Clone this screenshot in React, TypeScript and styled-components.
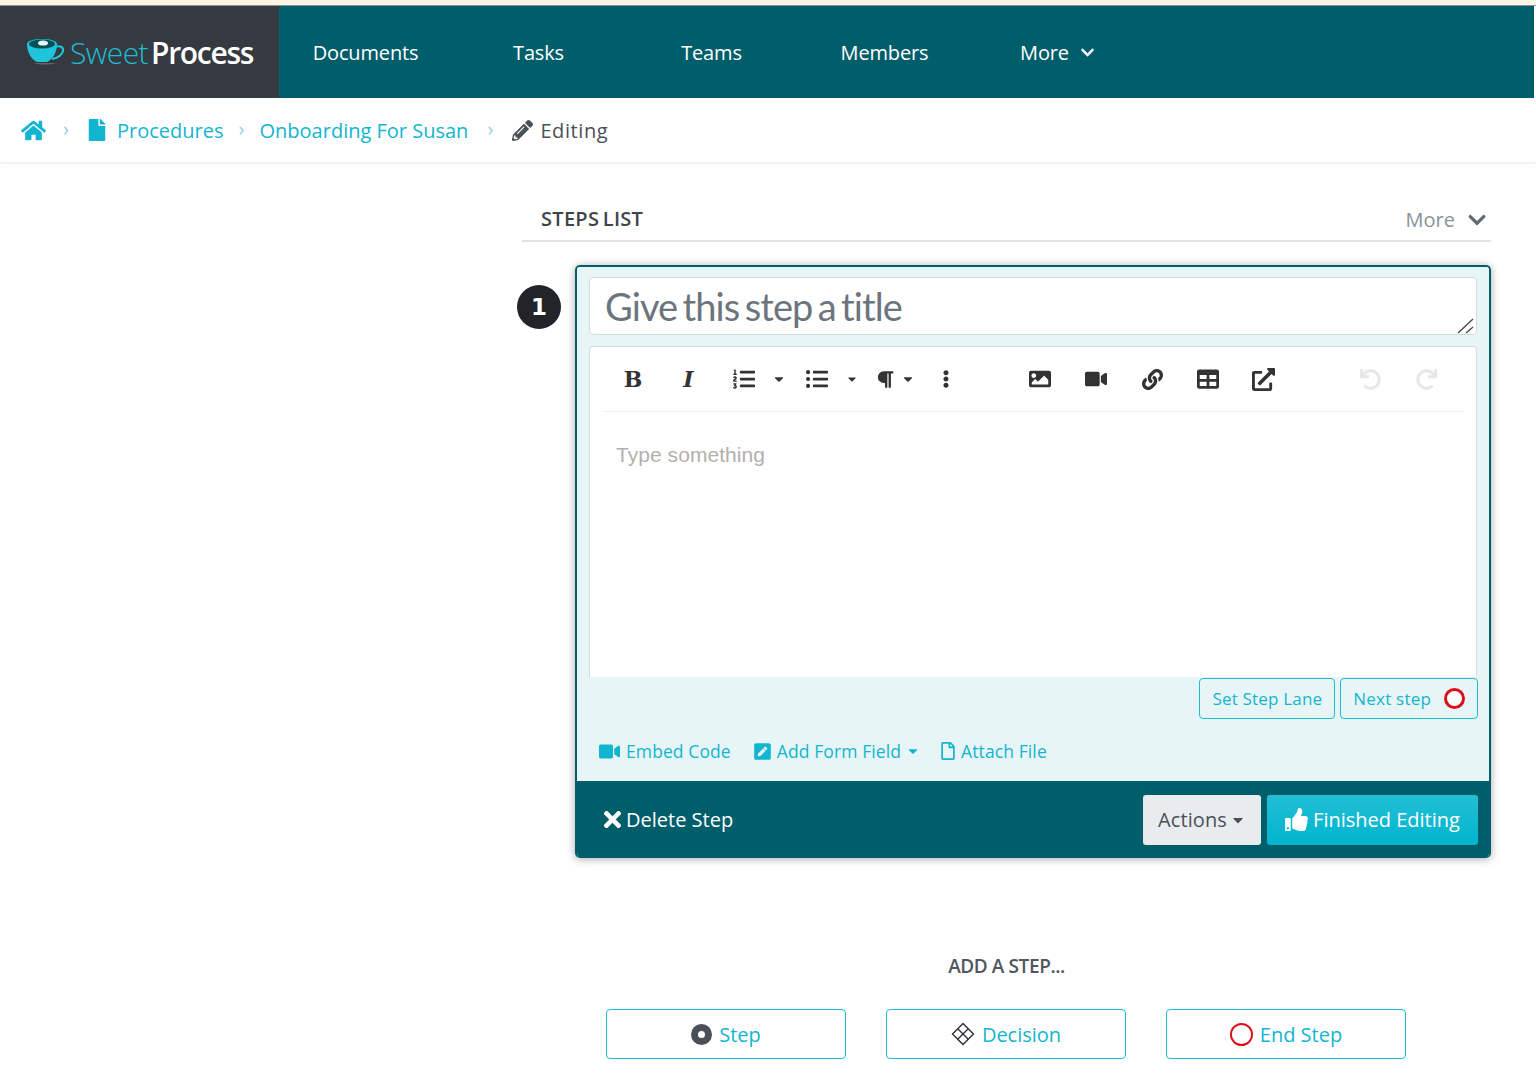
import React from 'react';
import styled, { createGlobalStyle } from 'styled-components';
import {
  FaCaretDown,
  FaChevronDown,
  FaEllipsisV,
  FaExternalLinkAlt,
  FaFile,
  FaHome,
  FaImage,
  FaLink,
  FaListOl,
  FaListUl,
  FaParagraph,
  FaPencilAlt,
  FaPenSquare,
  FaRedo,
  FaRegFile,
  FaTable,
  FaThumbsUp,
  FaTimes,
  FaUndo,
  FaVideo,
} from 'react-icons/fa';

const GlobalStyle = createGlobalStyle`
  html, body {
    margin: 0;
    padding: 0;
    background: #fff;
    font-family: "Open Sans", "Noto Sans", sans-serif;
    color: #495057;
  }
  * { box-sizing: border-box; }
`;

const NAV_ITEMS = ['Documents', 'Tasks', 'Teams', 'Members'];

function CupLogo() {
  return (
    <svg width="40" height="28" viewBox="0 0 40 28" aria-hidden="true">
      <path d="M28 9c6-2 10 0 9 4-1 4-6 7-11 8" fill="none" stroke="#1fc4da" strokeWidth="2" />
      <path d="M1 6c0-3 6-5 15-5s15 2 15 5c0 9-5 16-10 18H11C6 22 1 15 1 6z" fill="#1fc4da" />
      <ellipse cx="16" cy="6" rx="13" ry="4.5" fill="#00505c" />
      <ellipse cx="17" cy="5" rx="5" ry="2.6" fill="#e8f5f7" />
      <path d="M8 25h22c-4 2-18 2-22 0z" fill="#5c6670" />
    </svg>
  );
}

function RingMark({ size, stroke }: { size: number; stroke: number }) {
  return (
    <svg width={size} height={size} viewBox="0 0 24 24" aria-hidden="true">
      <circle cx="12" cy="12" r={12 - stroke / 2} fill="#fff" stroke="#d9101c" strokeWidth={stroke} />
    </svg>
  );
}

function DecisionMark() {
  return (
    <svg width="24" height="24" viewBox="0 0 24 24" aria-hidden="true">
      <g fill="none" stroke="#2b2f33" strokeWidth="1.4">
        <path d="M12 1.5L22.5 12 12 22.5 1.5 12z" />
        <path d="M7 7l10 10M17 7L7 17" />
      </g>
    </svg>
  );
}

function ResizeGrip() {
  return (
    <svg width="18" height="16" viewBox="0 0 18 16" aria-hidden="true">
      <path d="M1 15L16 1M9 15l7-6" fill="none" stroke="#444" strokeWidth="1.3" />
    </svg>
  );
}

export default function App() {
  return (
    <Page>
      <GlobalStyle />
      <TopStrip />
      <Header>
        <Brand>
          <CupLogo />
          <BrandLight>Sweet</BrandLight>
          <BrandBold>Process</BrandBold>
        </Brand>
        <Nav>
          {NAV_ITEMS.map((item) => (
            <NavItem key={item}>{item}</NavItem>
          ))}
          <NavItem>
            More
            <NavChevron>
              <FaChevronDown />
            </NavChevron>
          </NavItem>
        </Nav>
      </Header>

      <Breadcrumb>
        <CrumbLink>
          <FaHome size={25} />
        </CrumbLink>
        <CrumbSep $gap={17}>›</CrumbSep>
        <CrumbLink>
          <FaFile size={22} />
          <CrumbText>Procedures</CrumbText>
        </CrumbLink>
        <CrumbSep $gap={15}>›</CrumbSep>
        <CrumbLink>
          <CrumbText>Onboarding For Susan</CrumbText>
        </CrumbLink>
        <CrumbSep $gap={19}>›</CrumbSep>
        <CrumbCurrent>
          <FaPencilAlt size={21} />
          Editing
        </CrumbCurrent>
      </Breadcrumb>

      <Content>
        <ListHeader>
          <ListTitle>STEPS LIST</ListTitle>
          <ListMore>
            More
            <FaChevronDown size={20} color="#5f6b75" />
          </ListMore>
        </ListHeader>

        <StepRow>
          <StepNumber>1</StepNumber>
          <StepCard>
            <CardBody>
              <TitleBox>
                <TitleText>Give this step a title</TitleText>
                <GripHolder>
                  <ResizeGrip />
                </GripHolder>
              </TitleBox>
              <EditorBox>
                <Toolbar>
                  <ToolGroup>
                    <ToolBtn $w={56}><ToolLetter>B</ToolLetter></ToolBtn>
                    <ToolBtn $w={55}><ToolLetter $italic>I</ToolLetter></ToolBtn>
                    <ToolBtn $w={56}><FaListOl size={22} /></ToolBtn>
                    <ToolBtn $w={14}><FaCaretDown size={14} /></ToolBtn>
                    <ToolBtn $w={62}><FaListUl size={22} /></ToolBtn>
                    <ToolBtn $w={8}><FaCaretDown size={14} /></ToolBtn>
                    <ToolBtn $w={18} $ml={20}><FaParagraph size={19} /></ToolBtn>
                    <ToolBtn $w={28}><FaCaretDown size={14} /></ToolBtn>
                    <ToolBtn $w={48}><FaEllipsisV size={18} /></ToolBtn>
                  </ToolGroup>
                  <ToolGroup $ml={42}>
                    <ToolBtn $w={56}><FaImage size={22} /></ToolBtn>
                    <ToolBtn $w={56}><FaVideo size={22} /></ToolBtn>
                    <ToolBtn $w={56}><FaLink size={21} /></ToolBtn>
                    <ToolBtn $w={55}><FaTable size={22} /></ToolBtn>
                    <ToolBtn $w={56}><FaExternalLinkAlt size={23} /></ToolBtn>
                  </ToolGroup>
                  <ToolGroup $ml={51} $muted>
                    <ToolBtn $w={56}><FaUndo size={21} /></ToolBtn>
                    <ToolBtn $w={56}><FaRedo size={21} /></ToolBtn>
                  </ToolGroup>
                </Toolbar>
                <Placeholder>Type something</Placeholder>
              </EditorBox>
              <LaneRow>
                <OutlineBtn>Set Step Lane</OutlineBtn>
                <OutlineBtn>
                  Next step
                  <NextRing>
                    <RingMark size={21} stroke={3.4} />
                  </NextRing>
                </OutlineBtn>
              </LaneRow>
              <AttachRow>
                <AttachLink $gap={6}>
                  <FaVideo size={21} />
                  Embed Code
                </AttachLink>
                <AttachLink $gap={5} $ml={22}>
                  <FaPenSquare size={19} />
                  Add Form Field
                  <FaCaretDown size={14} />
                </AttachLink>
                <AttachLink $gap={4} $ml={19}>
                  <FaRegFile size={18} />
                  Attach File
                </AttachLink>
              </AttachRow>
            </CardBody>
            <CardFooter>
              <DeleteBtn>
                <FaTimes size={25} />
                Delete Step
              </DeleteBtn>
              <FooterActions>
                <ActionsBtn>
                  Actions
                  <FaCaretDown size={16} />
                </ActionsBtn>
                <FinishBtn>
                  <FaThumbsUp size={23} />
                  Finished Editing
                </FinishBtn>
              </FooterActions>
            </CardFooter>
          </StepCard>
        </StepRow>

        <AddTitle>ADD A STEP...</AddTitle>
        <AddRow>
          <AddBtn>
            <StepDot />
            Step
          </AddBtn>
          <AddBtn>
            <DecisionMark />
            Decision
          </AddBtn>
          <AddBtn>
            <RingMark size={23} stroke={2} />
            End Step
          </AddBtn>
        </AddRow>
      </Content>
    </Page>
  );
}

const Page = styled.div`
  width: 1536px;
  height: 1076px;
  overflow: hidden;
  background: #fff;
`;

const TopStrip = styled.div`
  height: 6px;
  background: #fdf4e3;
  border-bottom: 1px solid #8d9296;
`;

const Header = styled.header`
  display: flex;
  width: 1534px;
  height: 92px;
  background: #005e6b;
`;

const Brand = styled.div`
  display: flex;
  align-items: center;
  width: 279px;
  padding-left: 26px;
  background: #353940;
  flex: none;
`;

const BrandLight = styled.span`
  margin-left: 4px;
  font-size: 30px;
  font-weight: 300;
  letter-spacing: -0.6px;
  color: #1fbcd2;
`;

const BrandBold = styled.span`
  margin-left: 3px;
  font-size: 30px;
  font-weight: 600;
  letter-spacing: -1.3px;
  color: #fff;
`;

const Nav = styled.nav`
  display: flex;
`;

const NavItem = styled.a`
  display: flex;
  align-items: center;
  justify-content: center;
  width: 173px;
  padding-top: 1px;
  font-size: 20px;
  letter-spacing: -0.15px;
  color: #fff;
`;

const NavChevron = styled.span`
  display: inline-flex;
  margin-left: 11px;
  font-size: 15px;
`;

const Breadcrumb = styled.div`
  display: flex;
  align-items: center;
  height: 64px;
  padding-left: 21px;
  background: #fff;
  box-shadow: 0 1px 3px rgba(0, 0, 0, 0.1);
`;

const CrumbLink = styled.a`
  display: flex;
  align-items: center;
  gap: 9px;
  color: #12b5cf;
`;

const CrumbText = styled.span`
  font-size: 20px;
`;

const CrumbSep = styled.span<{ $gap: number }>`
  margin: -3px ${({ $gap }) => $gap}px 0;
  font-size: 20px;
  color: #8fd3de;
`;

const CrumbCurrent = styled.span`
  display: flex;
  align-items: center;
  gap: 7px;
  font-size: 20px;
  letter-spacing: 0.6px;
  color: #4a5058;
`;

const Content = styled.main`
  width: 969px;
  margin-left: 522px;
`;

const ListHeader = styled.div`
  display: flex;
  align-items: center;
  justify-content: space-between;
  height: 37px;
  margin-top: 43px;
  padding: 0 4px 8px 19px;
  border-bottom: 2px solid #e3e4e5;
`;

const ListTitle = styled.h2`
  margin: 0;
  font-size: 20px;
  font-weight: 600;
  letter-spacing: 0.3px;
  word-spacing: -2px;
  color: #3f454c;
`;

const ListMore = styled.div`
  display: flex;
  align-items: center;
  gap: 12px;
  margin-top: 2px;
  font-size: 20px;
  color: #8a9299;
`;

const StepRow = styled.div`
  display: flex;
  margin: 23px 0 0 -5px;
`;

const StepNumber = styled.div`
  display: flex;
  align-items: center;
  justify-content: center;
  width: 44px;
  height: 44px;
  margin: 20px 14px 0 0;
  flex: none;
  border-radius: 50%;
  background: #212529;
  color: #fff;
  font-family: "DejaVu Sans", sans-serif;
  font-size: 23px;
  font-weight: 700;
`;

const StepCard = styled.section`
  width: 916px;
  height: 593px;
  display: flex;
  flex-direction: column;
  border-radius: 5px;
  overflow: hidden;
  border: 2px solid #005e6b;
  border-bottom: none;
  box-shadow: 0 1px 8px rgba(0, 0, 0, 0.35);
`;

const CardBody = styled.div`
  flex: 1;
  padding: 10px 12px 0;
  background: #e8f5f7;
`;

const TitleBox = styled.div`
  position: relative;
  height: 58px;
  padding-left: 15px;
  background: #fff;
  border: 1px solid #d5d9dc;
  border-radius: 4px;
`;

const TitleText = styled.div`
  font-family: Lato, sans-serif;
  font-size: 38px;
  line-height: 56px;
  letter-spacing: -0.9px;
  word-spacing: -3.5px;
  color: #6c757d;
`;

const GripHolder = styled.span`
  position: absolute;
  right: 1px;
  bottom: 0;
  line-height: 0;
`;

const EditorBox = styled.div`
  height: 331px;
  margin-top: 11px;
  padding: 0 12px;
  background: #fff;
  border: 1px solid #d5d9dc;
  border-bottom: none;
  border-radius: 4px 4px 0 0;
`;

const Toolbar = styled.div`
  display: flex;
  align-items: center;
  height: 65px;
  padding-left: 3px;
  border-bottom: 1px solid #eff1f2;
`;

const ToolGroup = styled.div<{ $ml?: number; $muted?: boolean }>`
  display: flex;
  align-items: center;
  margin-left: ${({ $ml }) => $ml || 0}px;
  color: ${({ $muted }) => ($muted ? '#e6e7e8' : '#333')};
`;

const ToolBtn = styled.span<{ $w: number; $ml?: number }>`
  display: flex;
  align-items: center;
  justify-content: center;
  width: ${({ $w }) => $w}px;
  height: 30px;
  margin-left: ${({ $ml }) => $ml || 0}px;
  flex: none;
`;

const ToolLetter = styled.span<{ $italic?: boolean }>`
  font-family: "DejaVu Serif", serif;
  font-size: 22px;
  font-weight: 700;
  font-style: ${({ $italic }) => ($italic ? 'italic' : 'normal')};
  line-height: 1;
  color: #333;
`;

const Placeholder = styled.div`
  margin: 31px 0 0 14px;
  font-family: "Liberation Sans", Arial, sans-serif;
  font-size: 21px;
  letter-spacing: 0.05px;
  color: #b3b0ad;
`;

const LaneRow = styled.div`
  display: flex;
  justify-content: flex-end;
  gap: 5px;
  margin: 1px -1px 0 0;
`;

const OutlineBtn = styled.button`
  display: flex;
  align-items: center;
  height: 41px;
  padding: 0 12px;
  background: transparent;
  border: 1px solid #1fbcd2;
  border-radius: 4px;
  font: inherit;
  font-size: 17px;
  letter-spacing: 0.2px;
  color: #12b5cf;
`;

const NextRing = styled.span`
  display: inline-flex;
  margin-left: 13px;
`;

const AttachRow = styled.div`
  display: flex;
  align-items: center;
  margin-top: 20px;
  padding-left: 10px;
`;

const AttachLink = styled.a<{ $gap: number; $ml?: number }>`
  display: flex;
  align-items: center;
  gap: ${({ $gap }) => $gap}px;
  margin-left: ${({ $ml }) => $ml || 0}px;
  font-size: 17.5px;
  letter-spacing: 0.1px;
  color: #12b5cf;
`;

const CardFooter = styled.div`
  display: flex;
  align-items: center;
  justify-content: space-between;
  height: 77px;
  padding: 0 11px 0 23px;
  background: #005e6b;
`;

const DeleteBtn = styled.a`
  display: flex;
  align-items: center;
  gap: 1px;
  font-size: 20px;
  color: #fff;
`;

const FooterActions = styled.div`
  display: flex;
  gap: 6px;
`;

const ActionsBtn = styled.button`
  display: flex;
  align-items: center;
  justify-content: center;
  gap: 3px;
  width: 118px;
  height: 50px;
  background: #e9ecef;
  border: none;
  border-radius: 3px;
  font: inherit;
  font-size: 20px;
  letter-spacing: 0.1px;
  color: #495057;
`;

const FinishBtn = styled.button`
  display: flex;
  align-items: center;
  justify-content: center;
  gap: 5px;
  width: 211px;
  height: 50px;
  background: linear-gradient(#22bfd6, #00b4cd);
  border: none;
  border-radius: 3px;
  font: inherit;
  font-size: 20px;
  color: #fff;
`;

const AddTitle = styled.h3`
  margin: 95px 0 0;
  text-align: center;
  font-size: 19px;
  line-height: 26px;
  font-weight: 600;
  letter-spacing: -0.4px;
  color: #51575e;
`;

const AddRow = styled.div`
  display: flex;
  gap: 40px;
  margin-top: 30px;
  padding-left: 84px;
`;

const AddBtn = styled.button`
  display: flex;
  align-items: center;
  justify-content: center;
  gap: 7px;
  width: 240px;
  height: 50px;
  background: #fff;
  border: 1px solid #1fbcd2;
  border-radius: 4px;
  font: inherit;
  font-size: 20px;
  color: #12b5cf;
`;

const StepDot = styled.span`
  width: 21px;
  height: 21px;
  border-radius: 50%;
  border: 7px solid #4a5058;
  background: #fff;
`;
